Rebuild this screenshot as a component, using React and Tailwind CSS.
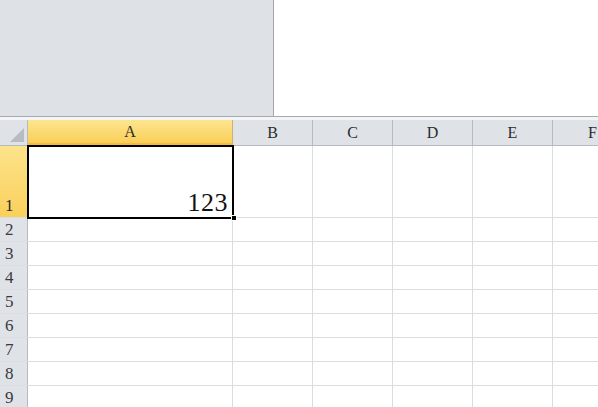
import React from "react";

const cols = ["B", "C", "D", "E", "F"];
const rows = [2, 3, 4, 5, 6, 7, 8, 9];

export default function App() {
  return (
    <div className="w-[598px] h-[407px] overflow-hidden bg-white font-['Liberation_Serif','DejaVu_Serif',serif]">
      <div className="flex h-[116px]">
        <div className="w-[274px] bg-[#dee1e6] border-r border-[#a3a7ac]" />
        <div className="flex-1 bg-white" />
      </div>
      <div className="h-px bg-[#a6a9ae]" />
      <div className="h-[3px] bg-[#f3f4f5]" />
      {/* header row */}
      <div className="flex h-[26px] w-[660px] border-b border-[#b5bac0]">
        <div className="relative w-[28px] shrink-0 bg-[#dfe3e8] border-r border-[#b5bac0]">
          <svg className="absolute right-[3px] bottom-[3px]" width="14" height="14" viewBox="0 0 14 14">
            <polygon points="14,0 14,14 0,14" fill="#b7bcc2" />
          </svg>
        </div>
        <div className="w-[205px] shrink-0 flex items-center justify-center bg-gradient-to-b from-[#fde58f] to-[#f9cf55] border-r border-[#c9b27a] border-b-2 border-b-[#f3b943] font-['Liberation_Serif',serif] text-[16px] text-[#2b2b2b]">
          A
        </div>
        {cols.map((c) => (
          <div key={c} className="w-[80px] shrink-0 flex items-center justify-center bg-[#dfe3e8] border-r border-[#b5bac0] font-['Liberation_Serif',serif] text-[16px] text-[#2b2b2b]">
            {c}
          </div>
        ))}
      </div>
      {/* row 1 */}
      <div className="flex h-[72px] w-[660px] border-b border-[#dadcdf]">
        <div className="w-[28px] shrink-0 flex items-end pl-[5px] pb-[1px] bg-gradient-to-b from-[#fde38a] to-[#f9d05a] border-r border-[#c9b27a] font-['Liberation_Serif',serif] text-[17px] text-[#2b2b2b] leading-[20px]">
          1
        </div>
        <div className="relative w-[205px] shrink-0 flex items-end justify-end pr-[5px] font-['Liberation_Serif',serif] text-[26px] leading-[28px] text-[#111]">
          <span className="tracking-[0.5px]">123</span>
          <div className="absolute -left-px -top-px -right-[1px] -bottom-[2px] border-2 border-black" />
          <div className="absolute -right-[4px] -bottom-[4px] w-[6px] h-[6px] bg-black border border-white" />
        </div>
        {cols.map((c) => (
          <div key={c} className="w-[80px] shrink-0 border-r border-[#dadcdf]" />
        ))}
      </div>
      {rows.map((r) => (
        <div key={r} className="flex h-[24px] w-[660px] border-b border-[#dadcdf]">
          <div className="w-[28px] shrink-0 flex items-center pl-[5px] bg-[#dfe3e8] border-r border-[#b5bac0] font-['Liberation_Serif',serif] text-[17px] text-[#3a3a3a]">
            {r}
          </div>
          <div className="w-[205px] shrink-0 border-r border-[#dadcdf]" />
          {cols.map((c) => (
            <div key={c} className="w-[80px] shrink-0 border-r border-[#dadcdf]" />
          ))}
        </div>
      ))}
    </div>
  );
}
